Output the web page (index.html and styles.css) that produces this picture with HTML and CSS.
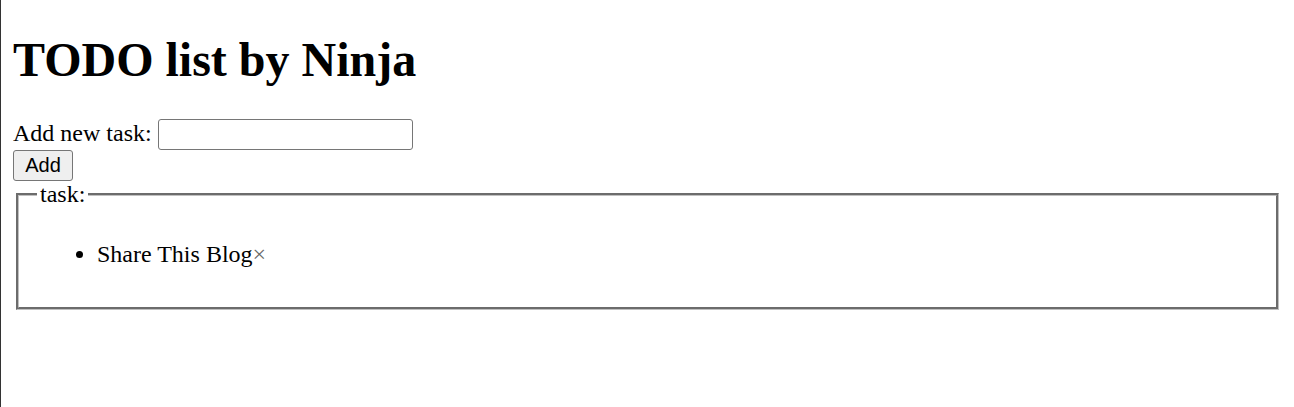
FILE: index.html
```html
<!DOCTYPE html>
<html lang="en">
<head>
<meta charset="utf-8">
<title>TODO list by Ninja</title>
<link rel="stylesheet" href="styles.css">
</head>
<body>
<h1 class="title">TODO list by Ninja</h1>
<form class="task-form">
<label class="task-label">Add new task: <input class="task-input" type="text"></label><br>
<button class="add-btn" type="button">Add</button>
<fieldset class="task-set">
<legend class="task-legend">task:</legend>
<ul class="task-list">
<li class="task-item">Share This Blog<span class="close">×</span></li>
</ul>
</fieldset>
</form>
</body>
</html>
```

FILE: styles.css
```css
html {
  height: 100%;
  box-sizing: border-box;
  border-left: 1px solid #333333;
  background: #ffffff;
}

body {
  margin: 0 12px 12px;
  padding: 0;
  font-family: "Liberation Serif", "Times New Roman", serif;
  font-size: 24px;
  color: #000000;
}

.title {
  font-size: 48px;
  font-weight: bold;
  margin: 32.16px 0;
}

.task-form {
  margin: 0;
}

.task-input {
  box-sizing: border-box;
  width: 255px;
  height: 31px;
  margin: 0;
  padding: 1.5px 3px;
  border: 1px solid #767676;
  border-radius: 3px;
  font-family: "Liberation Sans", Arial, sans-serif;
  font-size: 20px;
  background: #ffffff;
}

.add-btn {
  box-sizing: border-box;
  height: 31px;
  width: 60px;
  margin: 0;
  padding: 1.5px 9px;
  border: 1px solid #767676;
  border-radius: 3px;
  background: #efefef;
  color: #000000;
  font-family: "Liberation Sans", Arial, sans-serif;
  font-size: 20px;
}

.task-set {
  margin: 0 3px;
  padding: 8.4px 18px 15px;
  border: 3px groove #c0c0c0;
}

.task-legend {
  padding: 0 3px;
}

.task-list {
  margin: 24px 0;
  padding-left: 60px;
  list-style: disc;
}

.close {
  color: #666666;
}
```
